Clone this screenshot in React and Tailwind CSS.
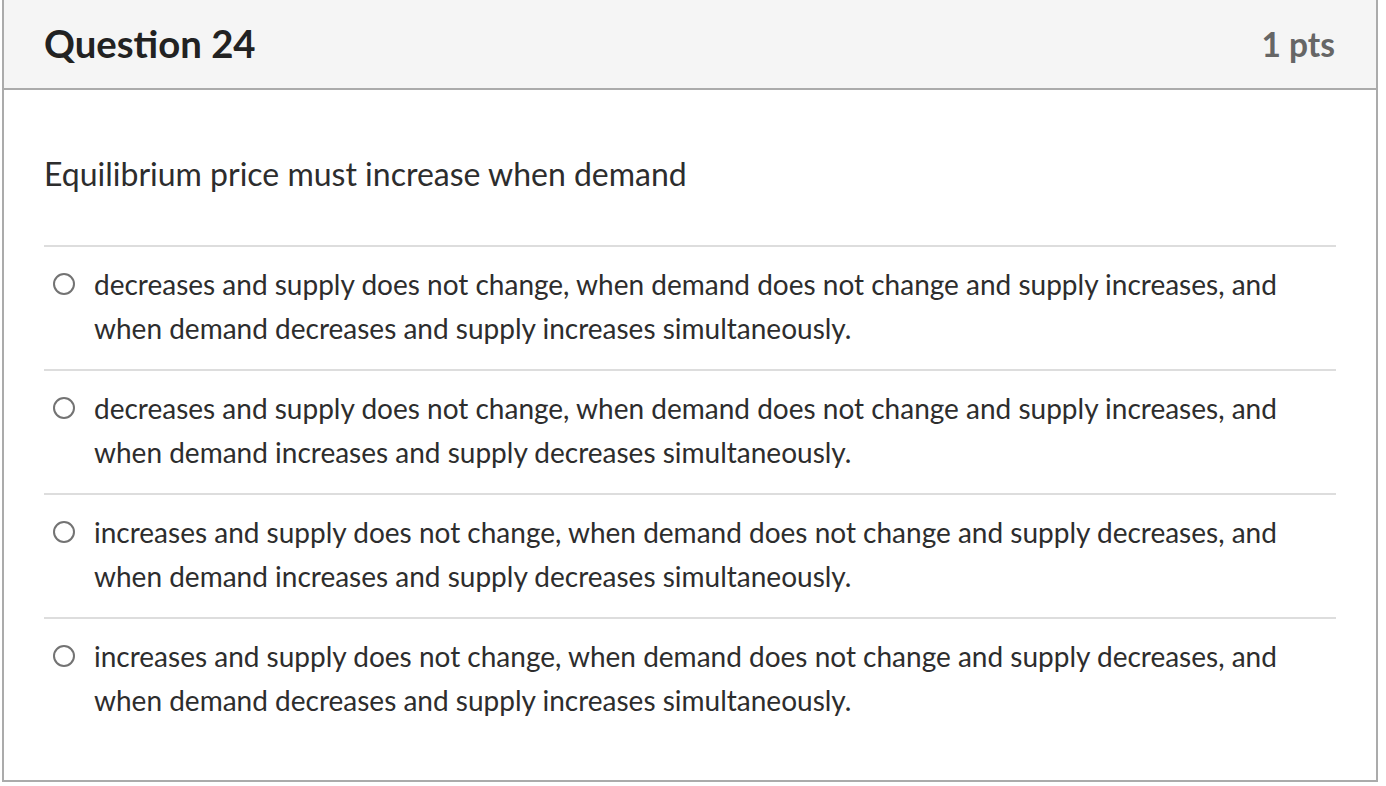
import React from "react";

const answers = [
  "decreases and supply does not change, when demand does not change and supply increases, and when demand decreases and supply increases simultaneously.",
  "decreases and supply does not change, when demand does not change and supply increases, and when demand increases and supply decreases simultaneously.",
  "increases and supply does not change, when demand does not change and supply decreases, and when demand increases and supply decreases simultaneously.",
  "increases and supply does not change, when demand does not change and supply decreases, and when demand decreases and supply increases simultaneously.",
];

function Radio() {
  return (
    <span className="mt-[11px] h-[22px] w-[22px] shrink-0 rounded-full border-2 border-[#737373] bg-white" />
  );
}

export default function App() {
  return (
    <div className="min-h-screen bg-white" style={{ fontFamily: "Lato, 'Liberation Sans', sans-serif" }}>
      <div className="ml-[2px] w-[1376px] border-x-2 border-b-2 border-[#ababab]">
        <div className="flex h-[90px] items-center justify-between border-b-2 border-[#ababab] bg-[#f5f5f5] pl-[40px] pr-[41px]">
          <h2 className="text-[38.3px] font-bold text-[#222]">Question 24</h2>
          <span className="text-[33.5px] font-bold text-[#666]">1 pts</span>
        </div>
        <div className="px-[40px] pb-[39px] pt-[64px]">
          <p className="text-[32px] leading-[40px] text-[#2d2d2d]">Equilibrium price must increase when demand</p>
          <ul className="mt-[51px]">
            {answers.map((text, i) => (
              <li key={i} className="flex gap-[19px] border-t-2 border-[#dddddd] pl-[9px] pr-[40px] pt-[15px] pb-[19px]">
                <Radio />
                <span className="text-[28px] leading-[44px] text-[#2d2d2d]">{text}</span>
              </li>
            ))}
          </ul>
        </div>
      </div>
    </div>
  );
}
